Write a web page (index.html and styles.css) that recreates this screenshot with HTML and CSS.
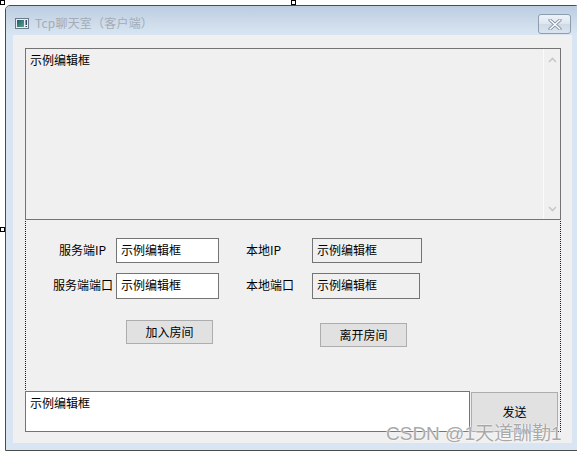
FILE: index.html
```html
<!DOCTYPE html>
<html>
<head>
<meta charset="utf-8">
<link rel="stylesheet" href="styles.css">
</head>
<body>
<div class="stage">
  <div class="window">
    <div class="titlebar">
      <svg class="app-icon" width="14" height="11" viewBox="0 0 14 11">
        <defs>
          <linearGradient id="ig" x1="0" y1="0" x2="1" y2="1">
            <stop offset="0" stop-color="#1f5a78"/>
            <stop offset="1" stop-color="#5aa57a"/>
          </linearGradient>
        </defs>
        <rect x="0.5" y="0.5" width="13" height="10" fill="#e8eef4" stroke="#6a7a8a"/>
        <rect x="2" y="2" width="7" height="7" fill="url(#ig)"/>
        <rect x="10.5" y="2" width="1.5" height="5" fill="#3a4a5a"/>
        <rect x="10.5" y="8" width="1.5" height="1" fill="#3a4a5a"/>
      </svg>
      <span class="title">Tcp聊天室（客户端）</span>
      <div class="close-btn">
        <svg width="16" height="11" viewBox="0 0 16 11">
          <path d="M3 1 L13 10 M13 1 L3 10" stroke="#8894a4" stroke-width="3.2" stroke-linecap="round"/>
          <path d="M3 1 L13 10 M13 1 L3 10" stroke="#ffffff" stroke-width="1.4" stroke-linecap="round"/>
        </svg>
      </div>
    </div>
    <div class="client">
      <div class="focus-rect"></div>
      <div class="log-box">
        <div class="log-text">示例编辑框</div>
        <div class="vscroll">
          <svg width="9" height="6" viewBox="0 0 9 6"><path d="M1 5 L4.5 1.5 L8 5" fill="none" stroke="#c8c8c8" stroke-width="1.6"/></svg>
          <svg width="9" height="6" viewBox="0 0 9 6"><path d="M1 1 L4.5 4.5 L8 1" fill="none" stroke="#c8c8c8" stroke-width="1.6"/></svg>
        </div>
      </div>

      <div class="row row-ip">
        <div class="label lbl-left pad-ip">服务端IP</div>
        <div class="edit edit-white w-srv">示例编辑框</div>
        <div class="label lbl-right">本地IP</div>
        <div class="edit edit-ro w-loc1">示例编辑框</div>
      </div>
      <div class="row row-port">
        <div class="label lbl-left pad-port">服务端端口</div>
        <div class="edit edit-white w-srv">示例编辑框</div>
        <div class="label lbl-right">本地端口</div>
        <div class="edit edit-ro w-loc2">示例编辑框</div>
      </div>

      <div class="btn-row">
        <div class="btn btn-join">加入房间</div>
        <div class="btn btn-leave">离开房间</div>
      </div>

      <div class="send-row">
        <div class="msg-box">示例编辑框</div>
        <div class="btn btn-send">发送</div>
      </div>
    </div>
  </div>

  <div class="handle h-tl"></div>
  <div class="handle h-tm"></div>
  <div class="handle h-ml"></div>

  <div class="watermark">CSDN @1天道酬勤1</div>
</div>
</body>
</html>
```

FILE: styles.css
```css
html, body {
  margin: 0;
  padding: 0;
  overflow: hidden;
  background: #ffffff;
}

.stage {
  position: relative;
  width: 577px;
  height: 453px;
  overflow: hidden;
  padding: 5px 0 0 5px;
  box-sizing: border-box;
  font-family: "Noto Sans CJK SC", "Liberation Sans", sans-serif;
  font-size: 12px;
  color: #000;
}

.window {
  width: 575px;
  height: 446px;
  box-sizing: border-box;
  border: 1px solid #4c4c4c;
  border-radius: 5px 5px 0 0;
  background: #d9e5f2;
  display: flex;
  flex-direction: column;
}

.titlebar {
  height: 29px;
  flex: none;
  display: flex;
  align-items: flex-start;
  background: linear-gradient(to bottom, #bccde0 0%, #cad8e8 45%, #d9e5f2 100%);
  border-radius: 4px 4px 0 0;
}

.app-icon {
  margin: 12px 0 0 9px;
  flex: none;
}

.title {
  margin: 9px 0 0 6px;
  color: #a3acb7;
  font-size: 12px;
  line-height: 16px;
  letter-spacing: 0.2px;
}

.close-btn {
  margin: 8px 8px 0 auto;
  width: 33px;
  height: 20px;
  box-sizing: border-box;
  border: 1px solid #8e9cb0;
  border-radius: 3px;
  background: linear-gradient(to bottom, #eef3f9 0%, #dde6f0 50%, #cfdae7 51%, #dbe4ee 100%);
  display: flex;
  align-items: center;
  justify-content: center;
}

.client {
  position: relative;
  margin: 0 7px;
  width: 559px;
  height: 408px;
  flex: none;
  background: #f0f0f0;
  display: flex;
  flex-direction: column;
}

.focus-rect {
  position: absolute;
  left: 12px;
  top: 184px;
  width: 536px;
  height: 213px;
  box-sizing: border-box;
  border: 1px dotted #0000ee;
  z-index: 0;
}

.log-box {
  position: relative;
  z-index: 1;
  margin: 13px 0 0 12px;
  width: 536px;
  height: 172px;
  box-sizing: border-box;
  border: 1px solid #747474;
  background: #f0f0f0;
  display: flex;
}

.log-text {
  flex: 1;
  padding: 3px 0 0 4px;
  line-height: 16px;
}

.vscroll {
  width: 17px;
  flex: none;
  border-left: 1px solid #fbfbfb;
  display: flex;
  flex-direction: column;
  justify-content: space-between;
  align-items: center;
  padding: 8px 0 7px;
  box-sizing: border-box;
}

.row {
  position: relative;
  z-index: 1;
  display: flex;
  align-items: center;
  flex: none;
}

.row-ip {
  margin-top: 18px;
  height: 25px;
}

.row-port {
  margin-top: 10px;
  height: 26px;
}

.label {
  line-height: 16px;
  white-space: nowrap;
  box-sizing: border-box;
}

.lbl-left {
  width: 63px;
  margin-left: 40px;
}

.pad-ip {
  padding-left: 6px;
  margin-top: -1px;
}

.pad-port {
  padding-left: 0;
  margin-top: -3px;
}

.lbl-right {
  width: 93px;
  padding-left: 27px;
  margin-top: -2px;
}

.edit {
  height: 100%;
  box-sizing: border-box;
  border: 1px solid #747474;
  padding: 3px 0 0 4px;
  line-height: 16px;
  white-space: nowrap;
}

.edit-white { background: #ffffff; }
.edit-ro { background: #f0f0f0; }

.w-srv { width: 103px; }
.w-loc1 { width: 110px; }
.w-loc2 { width: 108px; }

.btn-row {
  position: relative;
  z-index: 1;
  display: flex;
  align-items: flex-start;
  margin-top: 21px;
  flex: none;
}

.btn {
  box-sizing: border-box;
  border: 1px solid #adadad;
  background: #e1e1e1;
  display: flex;
  align-items: center;
  justify-content: center;
  line-height: 16px;
}

.btn-join {
  margin-left: 113px;
  width: 87px;
  height: 24px;
}

.btn-leave {
  margin-left: 107px;
  margin-top: 3px;
  width: 87px;
  height: 24px;
}

.send-row {
  position: relative;
  z-index: 1;
  display: flex;
  align-items: flex-start;
  margin-top: auto;
  margin-bottom: 11px;
  flex: none;
}

.msg-box {
  margin-left: 12px;
  width: 445px;
  height: 41px;
  box-sizing: border-box;
  border: 1px solid #747474;
  background: #ffffff;
  padding: 3px 0 0 4px;
  line-height: 16px;
}

.btn-send {
  margin-left: 1px;
  margin-top: 1px;
  width: 87px;
  height: 40px;
}

.handle {
  position: absolute;
  width: 5px;
  height: 5px;
  box-sizing: border-box;
  border: 1px solid #000;
  background: #fff;
}
.h-tl { left: 0; top: 0; }
.h-tm { left: 291px; top: 0; }
.h-ml { left: 0; top: 227px; }

.watermark {
  position: absolute;
  left: 386px;
  top: 422px;
  font-family: "Liberation Sans", "Noto Sans CJK SC", sans-serif;
  font-size: 19px;
  line-height: 24px;
  color: #a9a9a9;
  white-space: nowrap;
  text-shadow: 0 0 1px #ffffff, 0 0 2px #ffffff;
  z-index: 5;
}
```
